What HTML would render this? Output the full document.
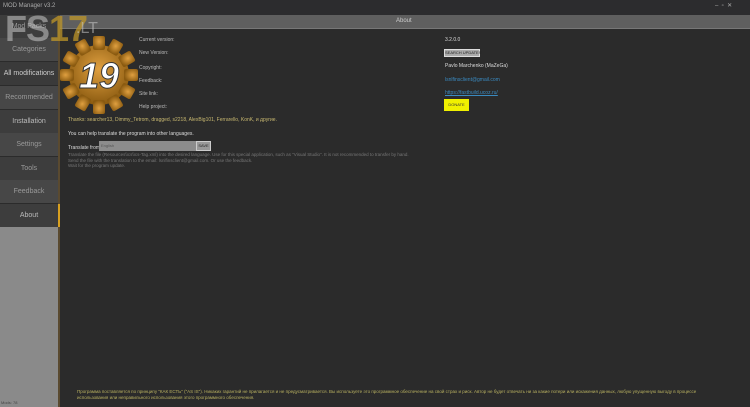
<!DOCTYPE html>
<html><head><meta charset="utf-8"><style>
*{margin:0;padding:0;box-sizing:border-box}
body{width:750px;height:407px;background:#2b2b2b;font-family:"Liberation Sans","Noto Sans CJK SC",sans-serif;position:relative;overflow:hidden;color:#ccc}
.a{position:absolute;white-space:nowrap}
.side div{position:absolute;left:0;width:58px;height:23px;color:#999;font-size:7px;text-align:center;line-height:23px}
.lbl{font-size:5px;color:#bbb}
</style></head><body>
<div class="a" style="left:0;top:0;width:750px;height:15px;background:#2c2c2e"></div>
<div class="a" style="left:3px;top:3px;font-size:6px;color:#aaa">MOD Manager v3.2</div>
<div class="a" style="left:715px;top:2px;font-size:6px;color:#aaa">–&nbsp;&nbsp;▫&nbsp;&nbsp;✕</div>
<div class="a" style="left:59px;top:15px;width:691px;height:14px;background:#5f5f5f;border-bottom:1px solid #777"></div>
<div class="a" style="left:396px;top:18px;font-size:6px;color:#ccc">About</div>
<div class="side">
<div style="top:15px;background:#3d3d3d">Mod Packs</div>
<div style="top:38px;background:#474747">Categories</div>
<div style="top:62px;background:#3a3a3a;color:#ccc">All modifications</div>
<div style="top:86px;background:#474747">Recommended</div>
<div style="top:110px;background:#3d3d3d;color:#bbb">Installation</div>
<div style="top:133px;background:#474747">Settings</div>
<div style="top:157px;background:#3d3d3d">Tools</div>
<div style="top:180px;background:#474747">Feedback</div>
<div style="top:204px;background:#3d3d3d;color:#bbb">About</div>
</div>
<div class="a" style="left:0;top:227px;width:58px;height:180px;background:#8a8a8a"></div>
<div class="a" style="left:1px;top:400px;font-size:4px;color:#444">Mods: 78</div>
<div class="a" style="left:58px;top:15px;width:2px;height:392px;background:#5a4a30"></div>
<div class="a" style="left:58px;top:204px;width:2px;height:23px;background:#d8a020"></div>
<!-- watermark -->
<div class="a" style="left:5px;top:8px;font-size:36px;font-weight:bold;color:rgba(200,200,200,.55);letter-spacing:-1px">FS<span style="color:rgba(190,150,40,.75)">17</span></div>
<div class="a" style="left:76px;top:20px;font-size:16px;color:rgba(200,200,200,.55)">.LT</div>
<!-- gear -->
<svg class="a" style="left:60px;top:36px" width="78" height="78" viewBox="0 0 78 78">
<defs><radialGradient id="g" cx="50%" cy="40%" r="60%"><stop offset="0" stop-color="#e0a040"/><stop offset="1" stop-color="#8a5a10"/></radialGradient></defs>
<g fill="url(#g)" transform="translate(39,39)">
<circle r="30"/>
<g id="t"><rect x="-6" y="-39" width="12" height="14" rx="2"/></g>
<use href="#t" transform="rotate(30)"/><use href="#t" transform="rotate(60)"/><use href="#t" transform="rotate(90)"/><use href="#t" transform="rotate(120)"/><use href="#t" transform="rotate(150)"/><use href="#t" transform="rotate(180)"/><use href="#t" transform="rotate(210)"/><use href="#t" transform="rotate(240)"/><use href="#t" transform="rotate(270)"/><use href="#t" transform="rotate(300)"/><use href="#t" transform="rotate(330)"/>
</g>
<text x="39" y="52" text-anchor="middle" font-family="Liberation Sans" font-weight="bold" font-style="italic" font-size="36" fill="#fff" stroke="#333" stroke-width="1">19</text>
</svg>
<div class="a lbl" style="left:139px;top:37px">Current version:</div>
<div class="a lbl" style="left:139px;top:50px">New Version:</div>
<div class="a lbl" style="left:139px;top:65px">Copyright:</div>
<div class="a lbl" style="left:139px;top:78px">Feedback:</div>
<div class="a lbl" style="left:139px;top:91px">Site link:</div>
<div class="a lbl" style="left:139px;top:104px">Help project:</div>
<div class="a lbl" style="left:445px;top:37px;color:#ddd">3.2.0.0</div>
<div class="a" style="left:444px;top:49px;width:36px;height:8px;background:#aaa;border:1px solid #ddd;font-size:4px;color:#222;line-height:6px;text-align:center">SEARCH UPDATES</div>
<div class="a lbl" style="left:445px;top:63px;color:#ddd">Pavlo Marchenko (MaZeGa)</div>
<div class="a lbl" style="left:445px;top:77px;color:#3a8ac0">lsnlfinsclient@gmail.com</div>
<div class="a lbl" style="left:445px;top:90px;color:#3a8ac0;text-decoration:underline">https://fastbuild.ucoz.ru/</div>
<div class="a" style="left:444px;top:99px;width:25px;height:12px;background:#f0f000;font-size:4px;color:#333;line-height:12px;text-align:center">DONATE</div>
<div class="a lbl" style="left:68px;top:117px;color:#c8b870">Thanks: searcher13, Dimmy_Tetrom, dragged, s2218, AlexBig101, Ferrarello, KonK, и другие.</div>
<div class="a lbl" style="left:68px;top:131px;color:#ddd">You can help translate the program into other languages.</div>
<div class="a lbl" style="left:68px;top:145px;color:#ddd">Translate from</div>
<div class="a" style="left:99px;top:141px;width:97px;height:10px;background:#8c8c8c;font-size:4px;color:#555;padding:2px 2px">English</div>
<div class="a" style="left:196px;top:141px;width:15px;height:10px;background:#999;border:1px solid #ccc;font-size:4px;color:#222;line-height:8px;text-align:center">SAVE</div>
<div class="a" style="left:68px;top:152px;font-size:4.5px;color:#777;line-height:5.7px">Translate the file (Resources\\cs\\cs-Tag.xml) into the desired language. Use for this special application, such as "Visual Studio". It is not recommended to transfer by hand.<br>Send the file with the translation to the email: lsnlfinsclient@gmail.com. Or use the feedback.<br>Wait for the program update.</div>
<div class="a" style="left:77px;top:389px;font-size:4.5px;color:#b8b060;line-height:6px">Программа поставляется по принципу "КАК ЕСТЬ" ("AS IS"). Никаких гарантий не прилагается и не предусматривается. Вы используете это программное обеспечение на свой страх и риск. Автор не будет отвечать ни за какие потери или искажения данных, любую упущенную выгоду в процессе<br>использования или неправильного использования этого программного обеспечения.</div>
</body></html>
